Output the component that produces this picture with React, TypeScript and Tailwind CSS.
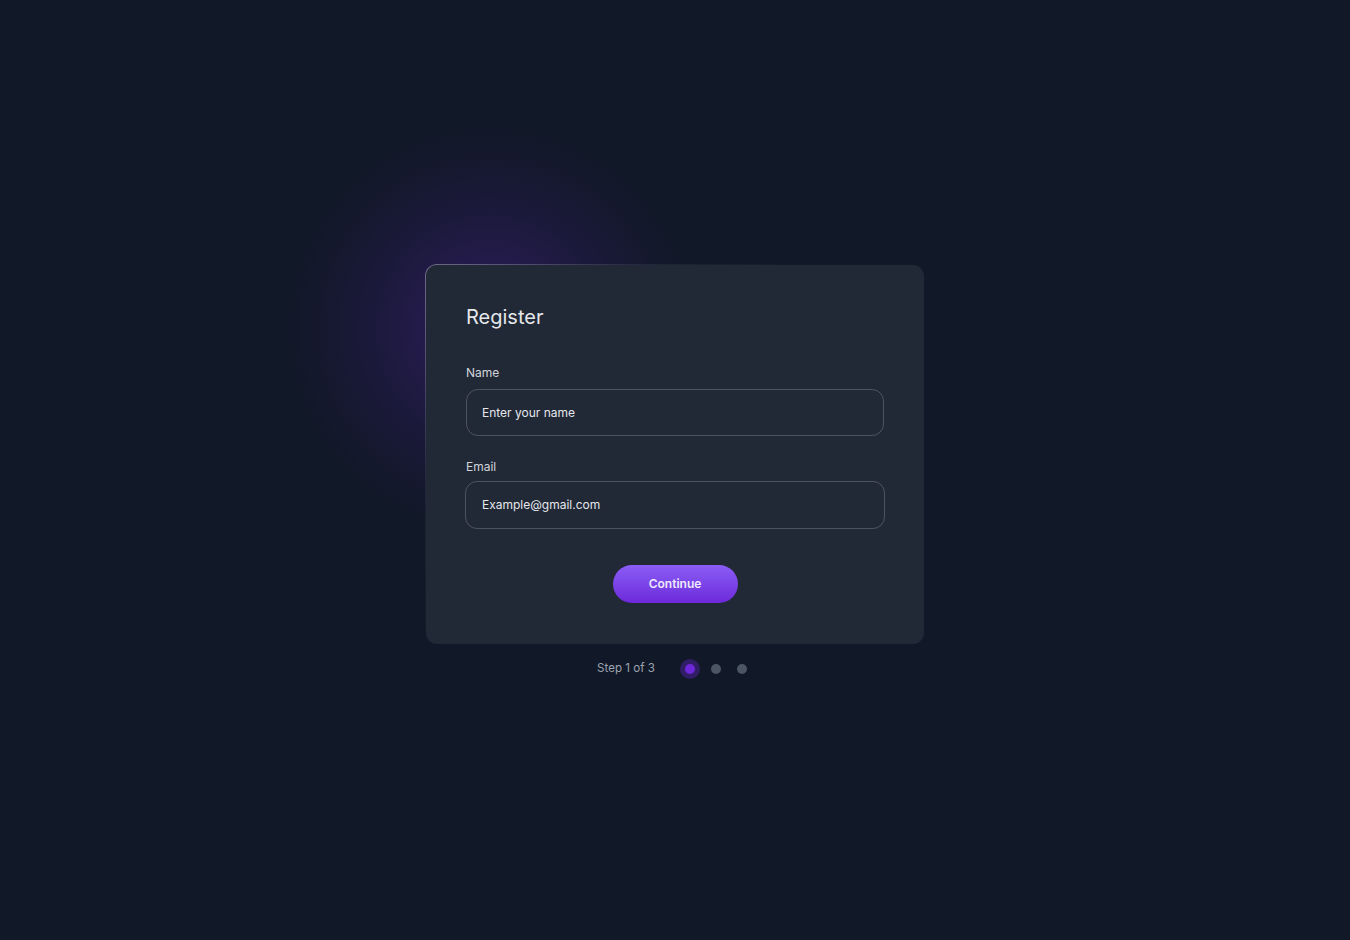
import { useState } from "react";

function Field({
  label,
  value,
  onChange,
  type = "text",
  tall = false,
}: {
  label: string;
  value: string;
  onChange: (v: string) => void;
  type?: string;
  tall?: boolean;
}) {
  return (
    <label className="block">
      <span className="block text-[12px] leading-4 text-[#d1d5db]">{label}</span>
      <input
        type={type}
        value={value}
        onChange={(e) => onChange(e.target.value)}
        className={`block rounded-xl border border-white/20 bg-transparent text-[12px] text-[#e5e7eb] outline-none ${
          tall ? "mt-[6px] h-12 -mx-px w-[calc(100%+2px)] px-4" : "mt-2 h-[47px] w-full px-[15px]"
        }`}
      />
    </label>
  );
}

export default function App() {
  const [name, setName] = useState("Enter your name");
  const [email, setEmail] = useState("Example@gmail.com");
  const step = 1;

  return (
    <div
      className="flex min-h-screen flex-col items-center justify-center bg-[#111827] pt-[2px]"
      style={{ fontFamily: "Inter, 'Noto Sans', sans-serif" }}
    >
      <div className="relative w-[500px]">
        {/* purple glow behind the top-left corner */}
        <div
          aria-hidden
          className="pointer-events-none absolute -left-[140px] -top-[140px] h-[410px] w-[410px] rounded-full bg-[radial-gradient(circle,rgba(109,40,217,0.32)_0%,rgba(91,33,182,0.14)_40%,rgba(17,24,39,0)_70%)]"
        />
        <div className="relative rounded-xl bg-[linear-gradient(135deg,rgba(255,255,255,0.35),rgba(255,255,255,0.06)_25%,rgba(255,255,255,0)_45%)] p-px">
          <div className="rounded-[11px] bg-[#212836] px-10 pb-[41px] pt-[38px]">
            <h1 className="text-[20px] leading-7 font-normal text-[#e5e7eb]">Register</h1>

            <div className="mt-[34px]">
              <Field label="Name" value={name} onChange={setName} />
            </div>
            <div className="mt-[23px]">
              <Field label="Email" value={email} onChange={setEmail} type="email" tall />
            </div>

            <div className="mt-9 flex justify-center">
              <button className="h-[38px] w-[125px] rounded-full bg-gradient-to-b from-[#8b5cf6] to-[#6d28d9] text-[12px] font-semibold text-[#ede9fe]">
                Continue
              </button>
            </div>
          </div>
        </div>
      </div>

      <div className="mt-[14px] flex h-5 items-center pr-[6px]">
        <span className="mr-[30px] text-[11.6px] text-[#9ca3af]">Step {step} of 3</span>
        <div className="flex items-center gap-4">
          <span className="h-2.5 w-2.5 rounded-full bg-[#6d28d9] ring-[5px] ring-[#6d28d9]/35" />
          <span className="h-2.5 w-2.5 rounded-full bg-[#4b5563]" />
          <span className="h-2.5 w-2.5 rounded-full bg-[#4b5563]" />
        </div>
      </div>
    </div>
  );
}
